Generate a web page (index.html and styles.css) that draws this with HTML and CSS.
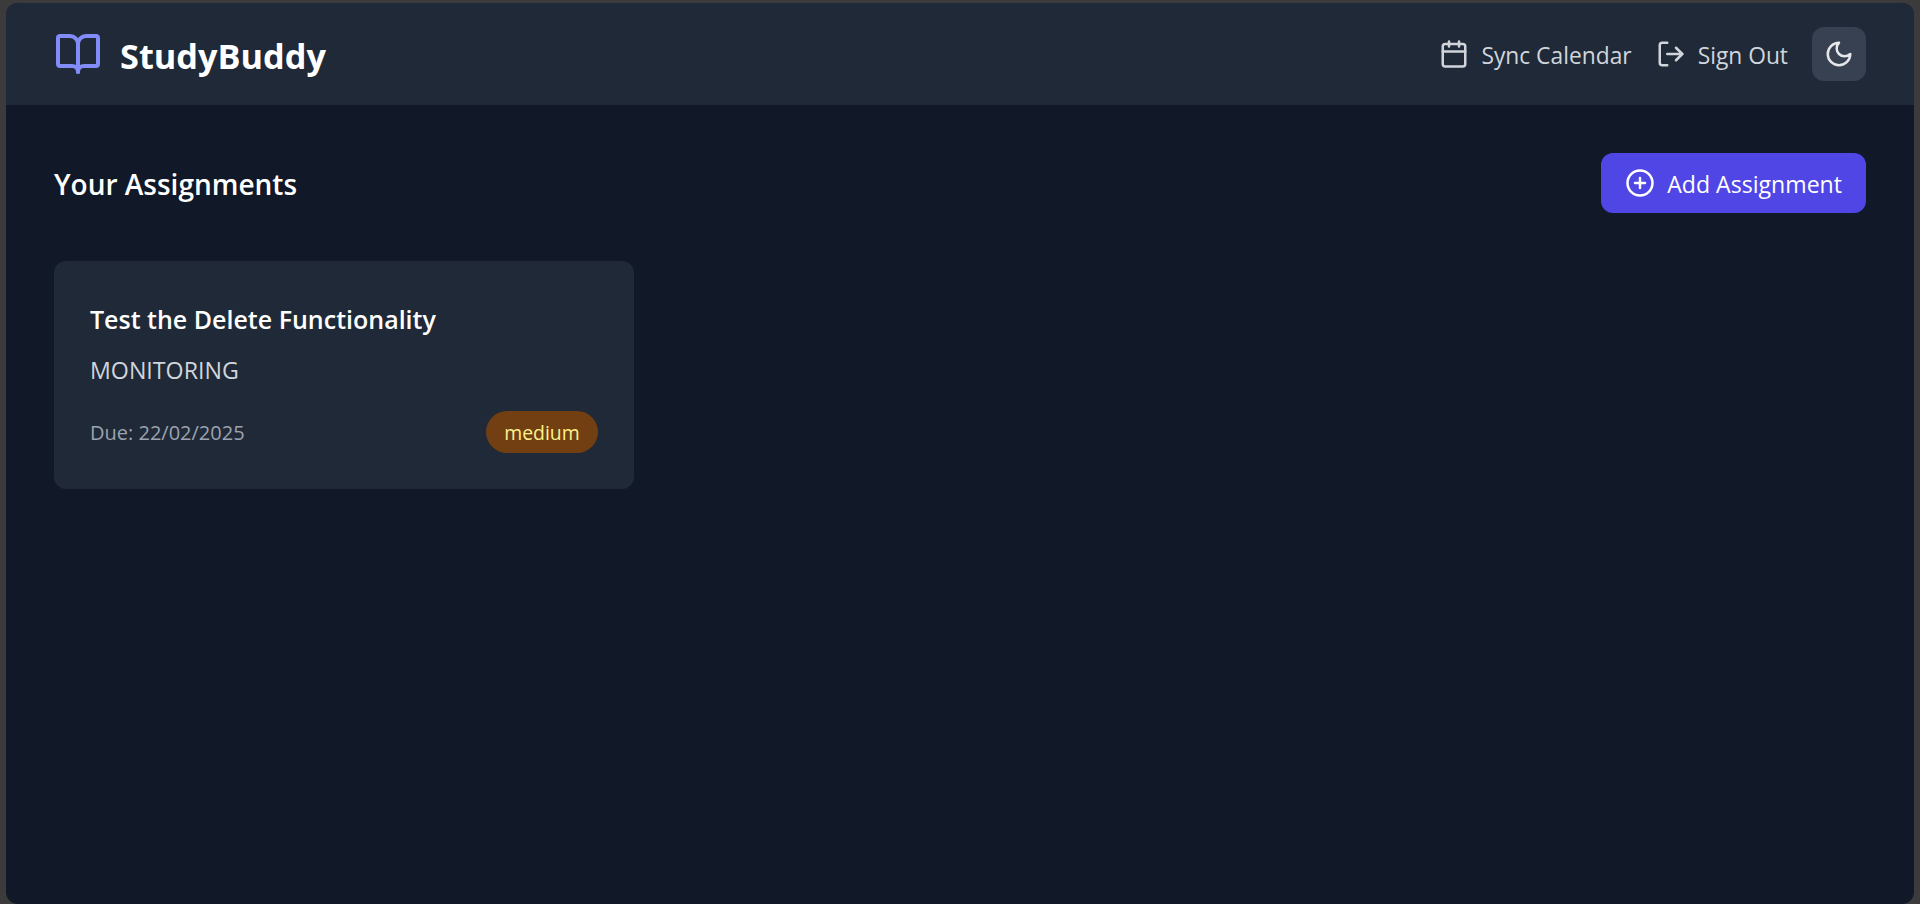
FILE: index.html
```html
<!DOCTYPE html>
<html lang="en">
<head>
    <title>StudyBuddy</title>
    <link rel="stylesheet" href="styles.css">
</head>
<body>
    <div class="app">
        <!-- Top navigation -->
        <header class="navbar">
            <div class="brand">
                <svg class="brand-icon" viewBox="0 0 24 24"><path d="M12 7v14"/><path d="M3 18a1 1 0 0 1-1-1V4a1 1 0 0 1 1-1h5a4 4 0 0 1 4 4 4 4 0 0 1 4-4h5a1 1 0 0 1 1 1v13a1 1 0 0 1-1 1h-6a3 3 0 0 0-3 3 3 3 0 0 0-3-3z"/></svg>
                <span class="brand-name">StudyBuddy</span>
            </div>
            <nav class="nav-actions">
                <a class="nav-link">
                    <svg class="icon" viewBox="0 0 24 24"><path d="M8 2v4"/><path d="M16 2v4"/><rect x="3" y="4" width="18" height="18" rx="2"/><path d="M3 10h18"/></svg>
                    <span class="nav-label">Sync Calendar</span>
                </a>
                <a class="nav-link">
                    <svg class="icon" viewBox="0 0 24 24"><path d="M9 21H5a2 2 0 0 1-2-2V5a2 2 0 0 1 2-2h4"/><path d="m16 17 5-5-5-5"/><path d="M21 12H9"/></svg>
                    <span class="nav-label">Sign Out</span>
                </a>
                <button class="theme-toggle">
                    <svg class="icon" viewBox="0 0 24 24"><path d="M12 3a6 6 0 0 0 9 9 9 9 0 1 1-9-9Z"/></svg>
                </button>
            </nav>
        </header>

        <!-- Assignment list -->
        <main class="content">
            <div class="content-header">
                <h2 class="page-title">Your Assignments</h2>
                <button class="add-button">
                    <svg class="icon" viewBox="0 0 24 24"><circle cx="12" cy="12" r="10"/><path d="M8 12h8"/><path d="M12 8v8"/></svg>
                    <span class="add-label">Add Assignment</span>
                </button>
            </div>

            <div class="assignment-grid">
                <article class="assignment-card">
                    <h3 class="assignment-title">Test the Delete Functionality</h3>
                    <p class="assignment-subject">MONITORING</p>
                    <div class="assignment-footer">
                        <span class="assignment-due">Due: 22/02/2025</span>
                        <span class="priority-badge">medium</span>
                    </div>
                </article>
            </div>
        </main>
    </div>
</body>
</html>
```

FILE: styles.css
```css
/* Base styles */
* {
    box-sizing: border-box;
}

html,
body {
    height: 100%;
}

body {
    margin: 0;
    padding: 3px 6px 0;
    background: #3b3b3b;
    font-family: "Open Sans", "Noto Sans", sans-serif;
    color: white;
    overflow: hidden;
}

/* App window */
.app {
    display: flex;
    flex-direction: column;
    height: 100%;
    background: #111827;
    border-radius: 12px;
    overflow: hidden;
}

/* Navigation bar */
.navbar {
    display: flex;
    justify-content: space-between;
    align-items: center;
    height: 102px;
    padding: 0 48px;
    background: #1f2937;
}

.brand {
    display: flex;
    align-items: center;
    gap: 18px;
}

.brand-icon {
    width: 48px;
    height: 48px;
    fill: none;
    stroke: #818cf8;
    stroke-width: 2;
    stroke-linecap: round;
    stroke-linejoin: round;
}

.brand-name {
    font-size: 34.3px;
    font-weight: 700;
    padding-top: 3px;
}

.nav-actions {
    display: flex;
    align-items: center;
    gap: 24px;
}

.nav-link {
    display: flex;
    align-items: center;
    gap: 12px;
    font-size: 22.8px;
    color: #d1d5db;
}

.nav-label {
    padding-top: 2px;
}

.icon {
    width: 30px;
    height: 30px;
    fill: none;
    stroke: currentColor;
    stroke-width: 2;
    stroke-linecap: round;
    stroke-linejoin: round;
}

.theme-toggle {
    display: flex;
    align-items: center;
    justify-content: center;
    width: 54px;
    height: 54px;
    padding: 0;
    border: none;
    border-radius: 12px;
    background: #374151;
    color: #e5e7eb;
}

/* Main content */
.content {
    flex-grow: 1;
    padding: 48px;
}

.content-header {
    display: flex;
    justify-content: space-between;
    align-items: center;
    margin-bottom: 48px;
}

.page-title {
    margin: 0;
    padding-top: 2px;
    font-size: 28px;
    font-weight: 600;
}

.add-button {
    display: flex;
    align-items: center;
    gap: 12px;
    height: 60px;
    padding: 0 24px;
    border: none;
    border-radius: 12px;
    background: #4f46e5;
    color: white;
    font-family: inherit;
    font-size: 23.1px;
}

.add-label {
    padding-top: 2px;
}

/* Assignment cards */
.assignment-grid {
    display: grid;
    grid-template-columns: repeat(3, 580px);
}

.assignment-card {
    padding: 36px;
    background: #1f2937;
    border-radius: 12px;
}

.assignment-title {
    margin: 0 0 14px;
    font-size: 25px;
    line-height: 44px;
    font-weight: 600;
}

.assignment-subject {
    margin: 0 0 26px;
    font-size: 23.2px;
    line-height: 30px;
    color: #d1d5db;
}

.assignment-footer {
    display: flex;
    justify-content: space-between;
    align-items: center;
}

.assignment-due {
    font-size: 20px;
    color: #9ca3af;
}

.priority-badge {
    width: 112px;
    height: 42px;
    border-radius: 999px;
    background: #713f12;
    color: #fef08a;
    font-size: 19.4px;
    line-height: 44px;
    text-align: center;
}
```
